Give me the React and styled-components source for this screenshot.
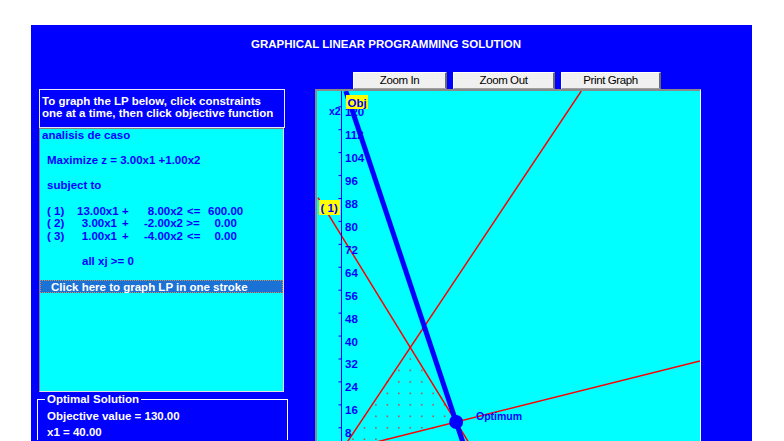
import React from "react";
import styled, { createGlobalStyle } from "styled-components";

const Global = createGlobalStyle`
  html, body { margin: 0; padding: 0; background: #ffffff; overflow: hidden; }
  body { font-family: "Liberation Sans", Arial, sans-serif; }
`;

const Page = styled.div`
  width: 784px;
  height: 441px;
  overflow: hidden;
  box-sizing: border-box;
  padding: 25px 0 0 31px;
`;

const Window = styled.div`
  width: 721px;
  height: 416px;
  background: #0000ff;
  overflow: hidden;
  display: flex;
  flex-direction: column;
`;

const Header = styled.div`
  height: 47px;
  flex: none;
  box-sizing: border-box;
  padding: 12px 0 0 220px;
  color: #ffffff;
  font-weight: bold;
  font-size: 11.5px;
  line-height: 14px;
`;

const Body = styled.div`
  display: flex;
  align-items: flex-start;
  padding-left: 6px;
  gap: 27px;
`;

const LeftCol = styled.div`
  width: 251px;
  margin-top: 17px;
  display: flex;
  flex-direction: column;
`;

const Instruction = styled.div`
  margin-left: 2px;
  width: 246px;
  height: 39px;
  box-sizing: border-box;
  border: 1px solid #e8e8ff;
  padding: 5px 0 0 2px;
  color: #ffffff;
  font-weight: bold;
  font-size: 11.5px;
  line-height: 12px;
  white-space: nowrap;
`;

const ListBox = styled.div`
  margin-left: 2px;
  width: 245px;
  height: 264px;
  box-sizing: border-box;
  background: #00ffff;
  border-top: 1px solid #808080;
  border-left: 1px solid #808080;
  border-right: 1px solid #e0e0e0;
  border-bottom: 1px solid #e0e0e0;
  color: #0000ff;
  font-weight: bold;
  font-size: 11.5px;
`;

const Item = styled.div`
  height: 12.6px;
  line-height: 12.6px;
  padding-left: ${(p) => p.$indent || 0}px;
  white-space: pre;
`;

const Selected = styled.div`
  height: 12.6px;
  line-height: 12px;
  box-sizing: border-box;
  padding-left: 10px;
  background: #1a72d6;
  color: #ffffff;
  border: 1px dotted #d09050;
  white-space: pre;
`;

const Constraint = styled.div`
  height: 12.6px;
  line-height: 12.6px;
  padding-left: 7px;
  display: grid;
  grid-template-columns: 30px 40px 12px 54px 21px auto;
  white-space: pre;
`;

const Cell = styled.span`
  text-align: ${(p) => (p.$right ? "right" : "left")};
  padding-left: ${(p) => p.$pad || 0}px;
`;

const Fieldset = styled.fieldset`
  margin: 1px 0 0 0;
  width: 251px;
  box-sizing: border-box;
  border: 1px solid #ffffff;
  border-bottom: none;
  padding: 0 0 0 7px;
  min-width: 0;
`;

const Legend = styled.legend`
  padding: 0 2px;
  color: #ffffff;
  font-weight: bold;
  font-size: 11.5px;
  line-height: 13px;
`;

const SolutionLine = styled.div`
  margin-left: 2px;
  color: #ffffff;
  font-weight: bold;
  font-size: 11.5px;
  line-height: 16px;
  &:first-of-type { margin-top: 2px; }
`;

const RightCol = styled.div`
  width: 386px;
  display: flex;
  flex-direction: column;
`;

const ButtonBar = styled.div`
  height: 17px;
  display: flex;
  gap: 6px;
  padding-left: 38px;
`;

const Button = styled.button`
  width: ${(p) => p.$w}px;
  height: 17px;
  box-sizing: border-box;
  margin: 0;
  padding: 0;
  background: #f0f0f0;
  border-top: 1px solid #ffffff;
  border-left: 1px solid #ffffff;
  border-right: 2px solid #6a6a6a;
  border-bottom: 1px solid #a0a0a0;
  font-family: "Liberation Sans Narrow", "Liberation Sans", Arial, sans-serif;
  font-size: 11.5px;
  letter-spacing: -0.4px;
  line-height: 15px;
  color: #000000;
`;

const GraphPanel = styled.div`
  width: 386px;
  height: 380px;
  box-sizing: border-box;
  background: #00ffff;
  border-top: 2px solid #8a8a8a;
  border-left: 2px solid #8a8a8a;
  border-right: 1px solid #ffffff;
  overflow: hidden;
`;

const Svg = styled.svg`
  display: block;
  font-family: "Liberation Sans", Arial, sans-serif;
  font-weight: bold;
`;

const S = 2.866;
const OX = 341.5;
const OY = 450.7;
const px = (x) => OX + S * x;
const py = (y) => OY - S * y;

function Graph() {
  const ticks = [];
  for (let v = 8; v <= 120; v += 8) ticks.push(v);
  const dots = [];
  for (let i = 0; i <= 13; i++) {
    for (let j = 0; j <= 12; j++) {
      const x = i * 4;
      const y = j * 4;
      if (x === 0 && y === 0) continue;
      if (13 * x + 8 * y <= 600 && y <= 1.5 * x && 4 * y >= x) dots.push([x, y]);
    }
  }
  return (
    <Svg width="383" height="360" viewBox="0 0 383 360">
      <g transform="translate(-317,-91)">
        {dots.map(([x, y]) => (
          <rect key={`${x}-${y}`} x={px(x) - 0.8} y={py(y) - 0.8} width="1.6" height="1.6" fill="#b05a5a" />
        ))}
        <line x1={318} y1={(OY - S * ((600 + 13 * ((OX - 318) / S)) / 8)).toFixed(1)} x2={px(48)} y2={py((600 - 13 * 48) / 8)} stroke="#ff0000" strokeWidth="1.5" />
        <line x1={OX} y1={OY} x2={px(125.5 / 1.5)} y2={py(125.5)} stroke="#ff0000" strokeWidth="1.5" />
        <line x1={OX} y1={OY} x2={700} y2={py((700 - OX) / S / 4)} stroke="#ff0000" strokeWidth="1.5" />
        <line x1={OX} y1={91} x2={OX} y2={452} stroke="#0000ff" strokeWidth="1" />
        {ticks.map((v) => (
          <g key={v}>
            <line x1={338.5} y1={py(v)} x2={OX} y2={py(v)} stroke="#0000ff" strokeWidth="1" />
            <text x={345} y={py(v) + 9.5} fontSize="11.5" fill="#0000ff">{v}</text>
          </g>
        ))}
        <text x={329} y={114.5} fontSize="10.5" fill="#0000ff">x2</text>
        <line x1={px((130 - 125.5) / 3)} y1={91} x2={px(130 / 3 + 2)} y2={py(-6)} stroke="#0000ff" strokeWidth="5" />
        <rect x={346} y={95} width={22} height={14} fill="#ffff00" />
        <text x={347.5} y={106.5} fontSize="11.5" fill="#0000ff">Obj</text>
        <rect x={319} y={200} width={21} height={15} fill="#ffff00" />
        <text x={320.5} y={212} fontSize="11.5" fill="#0000ff">( 1)</text>
        <circle cx={px(40)} cy={py(10)} r="7" fill="#0000ff" />
        <text x={476} y={419.5} fontSize="10.5" fill="#0000ff">Optimum</text>
      </g>
    </Svg>
  );
}

export default function App() {
  return (
    <>
      <Global />
      <Page>
        <Window>
          <Header>GRAPHICAL LINEAR PROGRAMMING SOLUTION</Header>
          <Body>
            <LeftCol>
              <Instruction>
                To graph the LP below, click constraints
                <br />
                one at a time, then click objective function
              </Instruction>
              <ListBox>
                <Item $indent={2}>analisis de caso</Item>
                <Item />
                <Item $indent={7}>Maximize z = 3.00x1 +1.00x2</Item>
                <Item />
                <Item $indent={7}>subject to</Item>
                <Item />
                <Constraint>
                  <Cell>( 1)</Cell>
                  <Cell $right>13.00x1</Cell>
                  <Cell $pad={5}>+</Cell>
                  <Cell $right>8.00x2</Cell>
                  <Cell $pad={4}>{"<="}</Cell>
                  <Cell $pad={4}>600.00</Cell>
                </Constraint>
                <Constraint>
                  <Cell>( 2)</Cell>
                  <Cell $right>3.00x1</Cell>
                  <Cell $pad={5}>+</Cell>
                  <Cell $right>-2.00x2</Cell>
                  <Cell $pad={0}>{" >="}</Cell>
                  <Cell $pad={4}>{"  0.00"}</Cell>
                </Constraint>
                <Constraint>
                  <Cell>( 3)</Cell>
                  <Cell $right>1.00x1</Cell>
                  <Cell $pad={5}>+</Cell>
                  <Cell $right>-4.00x2</Cell>
                  <Cell $pad={4}>{"<="}</Cell>
                  <Cell $pad={4}>{"  0.00"}</Cell>
                </Constraint>
                <Item />
                <Item $indent={42}>all xj &gt;= 0</Item>
                <Item />
                <Selected>Click here to graph LP in one stroke</Selected>
              </ListBox>
              <Fieldset>
                <Legend>Optimal Solution</Legend>
                <SolutionLine>Objective value = 130.00</SolutionLine>
                <SolutionLine>x1 = 40.00</SolutionLine>
              </Fieldset>
            </LeftCol>
            <RightCol>
              <ButtonBar>
                <Button $w={94}>Zoom In</Button>
                <Button $w={102}>Zoom Out</Button>
                <Button $w={100}>Print Graph</Button>
              </ButtonBar>
              <GraphPanel>
                <Graph />
              </GraphPanel>
            </RightCol>
          </Body>
        </Window>
      </Page>
    </>
  );
}
